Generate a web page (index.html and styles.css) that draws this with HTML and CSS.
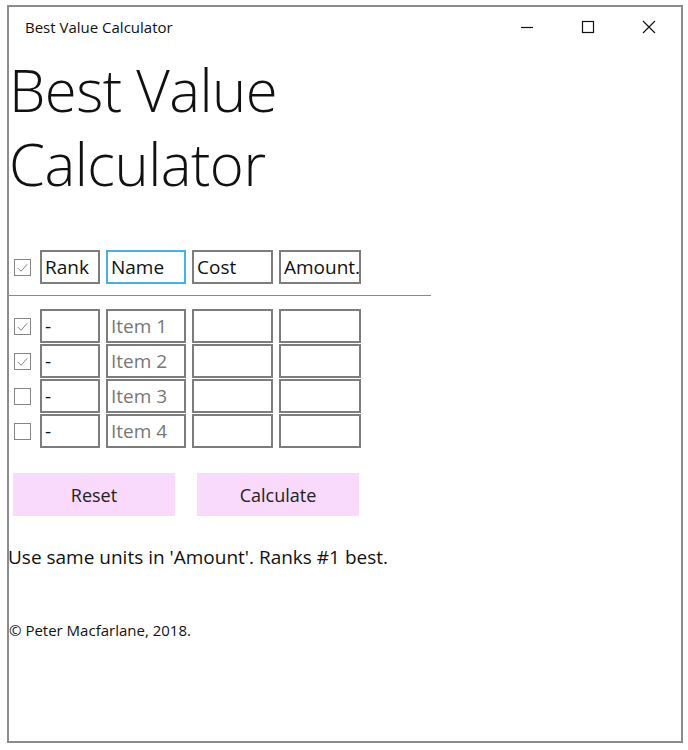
FILE: index.html
```html
<!DOCTYPE html>
<html lang="en">
<head>
<meta charset="utf-8">
<title>Best Value Calculator</title>
<link rel="stylesheet" href="styles.css">
</head>
<body>
<div class="window">
  <div class="titlebar">
    <span class="app-title">Best Value Calculator</span>
    <div class="controls">
      <span class="ctl"><svg width="14" height="14" viewBox="0 0 14 14"><path d="M1 7.5H13" stroke="#111" stroke-width="1.2"/></svg></span>
      <span class="ctl"><svg width="14" height="14" viewBox="0 0 14 14"><rect x="1.5" y="1.5" width="11" height="11" fill="none" stroke="#111" stroke-width="1.2"/></svg></span>
      <span class="ctl"><svg width="14" height="14" viewBox="0 0 14 14"><path d="M1 1L13 13M13 1L1 13" stroke="#111" stroke-width="1.2"/></svg></span>
    </div>
  </div>
  <main class="content">
    <h1 class="heading">Best Value<br>Calculator</h1>

    <div class="row header-row">
      <span class="check checked"><svg viewBox="0 0 16 16"><path d="M3 8.5L6.5 12L13 4.5" fill="none" stroke="#808080" stroke-width="1"/></svg></span>
      <div class="field c1">Rank</div>
      <div class="field c2 focused">Name</div>
      <div class="field c3">Cost</div>
      <div class="field c4">Amount.</div>
    </div>
    <div class="divider"></div>

    <div class="rows">
      <div class="row">
        <span class="check checked"><svg viewBox="0 0 16 16"><path d="M3 8.5L6.5 12L13 4.5" fill="none" stroke="#808080" stroke-width="1"/></svg></span>
        <div class="field c1">-</div>
        <div class="field c2 placeholder">Item 1</div>
        <div class="field c3"></div>
        <div class="field c4"></div>
      </div>
      <div class="row">
        <span class="check checked"><svg viewBox="0 0 16 16"><path d="M3 8.5L6.5 12L13 4.5" fill="none" stroke="#808080" stroke-width="1"/></svg></span>
        <div class="field c1">-</div>
        <div class="field c2 placeholder">Item 2</div>
        <div class="field c3"></div>
        <div class="field c4"></div>
      </div>
      <div class="row">
        <span class="check"></span>
        <div class="field c1">-</div>
        <div class="field c2 placeholder">Item 3</div>
        <div class="field c3"></div>
        <div class="field c4"></div>
      </div>
      <div class="row">
        <span class="check"></span>
        <div class="field c1">-</div>
        <div class="field c2 placeholder">Item 4</div>
        <div class="field c3"></div>
        <div class="field c4"></div>
      </div>
    </div>

    <div class="buttons">
      <button class="btn">Reset</button>
      <button class="btn">Calculate</button>
    </div>

    <p class="info">Use same units in 'Amount'. Ranks #1 best.</p>
    <p class="copyright">© Peter Macfarlane, 2018.</p>
  </main>
</div>
</body>
</html>
```
FILE: styles.css
```css
html, body {
  margin: 0;
  padding: 0;
  background: #ffffff;
}
body {
  font-family: "Open Sans", "Noto Sans", sans-serif;
  color: #111;
}
.window {
  margin: 5px 0 0 7px;
  width: 676px;
  height: 738px;
  box-sizing: border-box;
  border: 2px solid #8c8c8c;
  background: #fff;
  display: flex;
  flex-direction: column;
}
.titlebar {
  height: 40px;
  display: flex;
  align-items: center;
  justify-content: space-between;
  padding-left: 16px;
}
.app-title {
  font-size: 15px;
  color: #111;
}
.controls {
  display: flex;
  height: 100%;
  padding-right: 2px;
}
.ctl {
  width: 61px;
  display: flex;
  align-items: center;
  justify-content: center;
}
.content {
  padding-left: 0;
}
.heading {
  margin: 6px 0 0 0;
  font-weight: 300;
  font-size: 58px;
  line-height: 74px;
  color: #111;
  letter-spacing: -0.5px;
}
.row {
  display: flex;
  align-items: center;
  height: 34px;
}
.header-row {
  margin-top: 49px;
}
.check {
  width: 17px;
  height: 17px;
  box-sizing: border-box;
  border: 1px solid #858585;
  margin-left: 5px;
  margin-right: 9px;
  display: flex;
}
.check svg {
  width: 15px;
  height: 15px;
}
.field {
  box-sizing: border-box;
  height: 34px;
  border: 2px solid #7d7d7d;
  margin-right: 6px;
  font-size: 19px;
  line-height: 30px;
  padding-left: 3px;
  color: #111;
  white-space: nowrap;
  overflow: hidden;
}
.field.focused {
  border-color: #4aaee8;
}
.field.placeholder {
  color: #777;
}
.c1 { width: 60px; }
.c2 { width: 80px; }
.c3 { width: 81px; }
.c4 { width: 82px; }
.divider {
  margin-top: 11px;
  margin-left: -2px;
  width: 424px;
  height: 1px;
  background: #8a8a8a;
}
.rows {
  margin-top: 13px;
  display: flex;
  flex-direction: column;
  gap: 1px;
}
.buttons {
  display: flex;
  gap: 22px;
  margin-top: 25px;
  padding-left: 4px;
}
.btn {
  width: 162px;
  height: 43px;
  border: none;
  background: #f9d9fc;
  font-family: "Open Sans", "Noto Sans", sans-serif;
  font-size: 18px;
  color: #222;
  padding: 0;
}
.info {
  margin: 28px 0 0 -1px;
  font-size: 19px;
  color: #111;
}
.copyright {
  margin: 50px 0 0 0;
  font-size: 15px;
  color: #111;
}
```
